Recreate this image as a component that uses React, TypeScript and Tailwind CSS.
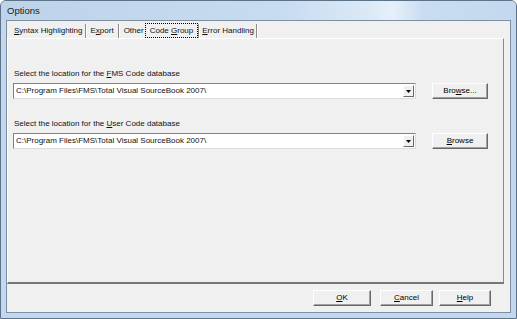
import type { ReactNode } from 'react';

const Btn = ({ children, w }: { children: ReactNode; w: string }) => (
  <div
    className={`${w} h-[16px] flex items-center justify-center bg-[#f0f0f0] border border-t-white border-l-white border-r-[#696969] border-b-[#696969] shadow-[inset_-1px_-1px_0_#a0a0a0] text-[8px] leading-none text-black`}
  >
    <span>{children}</span>
  </div>
);

const Sep = () => <div className="w-[2px] h-[14px] border-l border-l-[#8a8a8a] border-r border-r-white" />;

const Combo = ({ value }: { value: string }) => (
  <div className="w-[403px] h-[16px] flex items-center bg-white border border-t-[#828282] border-l-[#828282] border-b-[#dcdcdc] border-r-[#dcdcdc]">
    <span className="flex-1 pl-[2px] text-[8px] leading-none text-[#111] whitespace-nowrap">{value}</span>
    <div className="w-[11px] h-[12px] mr-[1px] flex items-center justify-center bg-[#f0f0f0] border border-t-white border-l-white border-r-[#696969] border-b-[#696969]">
      <svg width="5" height="3" viewBox="0 0 5 3">
        <path d="M0 0h5L2.5 3z" fill="#000" />
      </svg>
    </div>
  </div>
);

const App = () => {
  const path = 'C:\\Program Files\\FMS\\Total Visual SourceBook 2007\\';

  return (
    <div className="w-[517px] h-[319px] flex flex-col bg-[#c3d8ee] border border-[#5d7389] rounded-t-[6px] font-['Liberation_Sans',Arial,sans-serif] text-[#111] overflow-hidden">
      {/* Title bar */}
      <div className="h-[19px] flex items-center pl-[6px] bg-[linear-gradient(90deg,#bcd3ea_0%,#c8dcf0_55%,#dceaf7_72%,#e6f0fa_76%,#c9ddf1_82%,#c3d8ee_100%)]">
        <span className="text-[9.5px] leading-none font-normal text-[#1a1a1a]">Options</span>
      </div>

      {/* Client area */}
      <div className="flex-1 flex px-[5px] pb-[5px]">
        <div className="flex-1 flex flex-col bg-[#f0f0f0] border border-[#7d8ea0]">
          {/* Tab strip */}
          <div className="h-[17px] flex items-end pl-[5px] text-[8px] leading-none">
            <div className="h-[15px] flex items-center">
              <span className="px-[2px]">
                <span className="underline">S</span>yntax Highlighting
              </span>
              <Sep />
              <span className="px-[4px]">
                E<span className="underline">x</span>port
              </span>
              <Sep />
              <span className="pl-[4px] pr-[1px]">Other</span>
              <div className="h-[15px] flex items-center px-[4px] border border-dotted border-black">
                <span>
                  Code <span className="underline">G</span>roup
                </span>
              </div>
              <Sep />
              <span className="px-[2px]">
                <span className="underline">E</span>rror Handling
              </span>
              <Sep />
            </div>
          </div>

          {/* Tab panel */}
          <div className="h-[246px] mr-[6px] flex flex-col pl-[5px] pt-[30px] border border-t-white border-l-white border-r-[#8a8a8a] border-b-2 border-b-[#767676]">
            <div className="h-[10px] text-[8px] leading-[10px] pl-[1px]">
              Select the location for the <span className="underline">F</span>MS Code database
            </div>
            <div className="mt-[4px] flex items-center gap-[16px]">
              <Combo value={path} />
              <Btn w="w-[56px]">
                Bro<span className="underline">w</span>se...
              </Btn>
            </div>
            <div className="mt-[20px] h-[10px] text-[8px] leading-[10px] pl-[1px]">
              Select the location for the <span className="underline">U</span>ser Code database
            </div>
            <div className="mt-[4px] flex items-center gap-[16px]">
              <Combo value={path} />
              <Btn w="w-[56px]">
                <span className="underline">B</span>rowse
              </Btn>
            </div>
          </div>

          {/* Footer buttons */}
          <div className="flex justify-end pt-[6px] pr-[19px]">
            <Btn w="w-[58px]">
              <span className="underline">O</span>K
            </Btn>
            <div className="w-[9px]" />
            <Btn w="w-[53px]">
              <span className="underline">C</span>ancel
            </Btn>
            <div className="w-[6px]" />
            <Btn w="w-[52px]">
              <span className="underline">H</span>elp
            </Btn>
          </div>
        </div>
      </div>
    </div>
  );
};

export default App;
